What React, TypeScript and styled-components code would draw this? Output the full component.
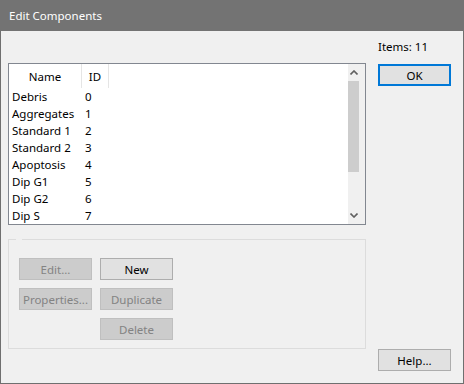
import styled, { createGlobalStyle } from "styled-components";

const GlobalStyle = createGlobalStyle`
  html, body {
    margin: 0;
    padding: 0;
    background: #f0f0f0;
  }
  body {
    font-family: "Noto Sans", "Open Sans", sans-serif;
    font-size: 11.5px;
  }
`;

const Window = styled.div`
  width: 464px;
  height: 384px;
  box-sizing: border-box;
  border: 1px solid #6f6f6f;
  border-top: none;
  background: #f0f0f0;
  display: flex;
  flex-direction: column;
`;

const TitleBar = styled.div`
  height: 31px;
  margin: 0 -1px;
  background: #737373;
  color: #ffffff;
  display: flex;
  align-items: center;
  padding-left: 9px;
  font-size: 11.5px;
  flex-shrink: 0;
`;

const Body = styled.div`
  flex: 1;
  display: flex;
  gap: 12px;
  padding-left: 7px;
`;

const LeftColumn = styled.div`
  width: 358px;
  display: flex;
  flex-direction: column;
  padding-top: 32px;
  gap: 14px;
`;

const RightColumn = styled.div`
  width: 73px;
  display: flex;
  flex-direction: column;
  padding-top: 8px;
  padding-bottom: 12px;
`;

const ItemsLabel = styled.div`
  height: 16px;
  line-height: 16px;
  margin-bottom: 9px;
  color: #000;
`;

const Spacer = styled.div`
  flex: 1;
`;

const ListBox = styled.div`
  height: 162px;
  box-sizing: border-box;
  border: 1px solid #828790;
  background: #ffffff;
  display: flex;
`;

const ListContent = styled.div`
  flex: 1;
  display: flex;
  flex-direction: column;
`;

const Row = styled.div<{ header?: boolean }>`
  display: flex;
  height: ${(p) => (p.header ? "24px" : "17px")};
  align-items: center;
  color: #000;
`;

const Cell = styled.div<{ width: number; header?: boolean }>`
  width: ${(p) => p.width}px;
  box-sizing: border-box;
  height: 100%;
  display: flex;
  align-items: center;
  justify-content: ${(p) => (p.header ? "center" : "flex-start")};
  padding-left: ${(p) => (p.header ? "0" : "3px")};
  border-right: ${(p) => (p.header ? "1px solid #e5e5e5" : "none")};
  white-space: nowrap;
`;

const ScrollTrack = styled.div`
  width: 17px;
  background: #f0f0f0;
  display: flex;
`;

const ScrollLane = styled.div`
  width: 11px;
  display: flex;
  flex-direction: column;
`;

const ArrowButton = styled.div`
  height: 17px;
  display: flex;
  align-items: center;
  justify-content: center;
`;

const Thumb = styled.div`
  height: 91px;
  background: #cdcdcd;
`;

const GroupBox = styled.div`
  position: relative;
  height: 110px;
  box-sizing: border-box;
  border: 1px solid #dcdcdc;
  padding: 18px 0 0 10px;

  &::before {
    content: "";
    position: absolute;
    top: -1px;
    left: 7px;
    width: 6px;
    height: 1px;
    background: #f0f0f0;
  }
`;

const ButtonGrid = styled.div`
  display: grid;
  grid-template-columns: 73px 73px;
  grid-auto-rows: 22px;
  gap: 8px;
`;

const Button = styled.div<{ disabled?: boolean; focused?: boolean; col?: number }>`
  box-sizing: border-box;
  height: 22px;
  display: flex;
  align-items: center;
  justify-content: center;
  grid-column: ${(p) => p.col ?? "auto"};
  background: ${(p) => (p.disabled ? "#cccccc" : "#e1e1e1")};
  border: ${(p) =>
    p.focused
      ? "2px solid #0078d7"
      : p.disabled
      ? "1px solid #bfbfbf"
      : "1px solid #adadad"};
  color: ${(p) => (p.disabled ? "#838383" : "#000000")};
  white-space: nowrap;
`;

const rows: [string, number][] = [
  ["Debris", 0],
  ["Aggregates", 1],
  ["Standard 1", 2],
  ["Standard 2", 3],
  ["Apoptosis", 4],
  ["Dip G1", 5],
  ["Dip G2", 6],
  ["Dip S", 7],
];

const Chevron = ({ up }: { up?: boolean }) => (
  <svg width="8" height="5" viewBox="0 0 8 5">
    <path
      d={up ? "M0.5 4.5 L4 1 L7.5 4.5" : "M0.5 0.5 L4 4 L7.5 0.5"}
      fill="none"
      stroke="#606060"
      strokeWidth="1.6"
    />
  </svg>
);

const App = () => {
  return (
    <Window>
      <GlobalStyle />
      <TitleBar>Edit Components</TitleBar>
      <Body>
        <LeftColumn>
          <ListBox>
            <ListContent>
              <Row header>
                <Cell width={73} header>
                  Name
                </Cell>
                <Cell width={27} header>
                  ID
                </Cell>
              </Row>
              {rows.map(([name, id]) => (
                <Row key={name}>
                  <Cell width={73}>{name}</Cell>
                  <Cell width={27}>{id}</Cell>
                </Row>
              ))}
            </ListContent>
            <ScrollTrack>
              <ScrollLane>
                <ArrowButton>
                  <Chevron up />
                </ArrowButton>
                <Thumb />
                <Spacer />
                <ArrowButton>
                  <Chevron />
                </ArrowButton>
              </ScrollLane>
            </ScrollTrack>
          </ListBox>
          <GroupBox>
            <ButtonGrid>
              <Button disabled>Edit...</Button>
              <Button>New</Button>
              <Button disabled>Properties...</Button>
              <Button disabled>Duplicate</Button>
              <Button disabled col={2}>
                Delete
              </Button>
            </ButtonGrid>
          </GroupBox>
        </LeftColumn>
        <RightColumn>
          <ItemsLabel>Items: 11</ItemsLabel>
          <Button focused>OK</Button>
          <Spacer />
          <Button>Help...</Button>
        </RightColumn>
      </Body>
    </Window>
  );
};

export default App;
